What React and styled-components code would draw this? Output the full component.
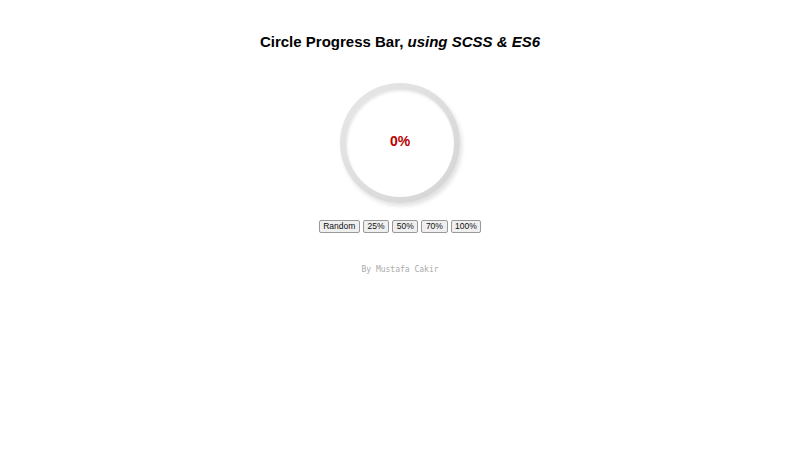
import React, { useState } from "react";
import styled, { createGlobalStyle } from "styled-components";

const Global = createGlobalStyle`
  html, body { margin: 0; padding: 0; background: #fff; }
  body { font-family: "Liberation Sans", Arial, sans-serif; }
`;

const Page = styled.main`
  display: flex;
  flex-direction: column;
  align-items: center;
  padding-top: 32px;
`;

const Title = styled.h1`
  margin: 0;
  font-size: 15px;
  line-height: 20px;
  font-weight: 700;
  color: #000;
  em { font-style: italic; }
`;

const Ring = styled.div`
  margin-top: 31px;
  width: 120px;
  height: 120px;
  border-radius: 50%;
  background: linear-gradient(135deg, #e8e8e8 0%, #d4d4d4 100%);
  box-shadow: 2px 3px 4px rgba(0, 0, 0, 0.12);
  display: flex;
  align-items: center;
  justify-content: center;
`;

const Inner = styled.div`
  width: 108px;
  height: 108px;
  border-radius: 50%;
  background: #fff;
  box-shadow: inset 1px 2px 3px rgba(0, 0, 0, 0.1);
  display: flex;
  align-items: center;
  justify-content: center;
  padding-bottom: 4px;
  box-sizing: border-box;
`;

const Percent = styled.span`
  color: #b80000;
  font-weight: 700;
  font-size: 14px;
`;

const Controls = styled.div`
  margin-top: 17px;
  display: flex;
  gap: 3px;
`;

const Button = styled.button`
  font-family: "Liberation Sans", Arial, sans-serif;
  font-size: 8.5px;
  line-height: 11px;
  padding: 0 3.6px;
  background: #efefef;
  color: #111;
  border: 1px solid #999;
  border-radius: 2px;
  cursor: pointer;
`;

const Credit = styled.p`
  margin: 32px 0 0;
  font-family: "DejaVu Sans Mono", "Liberation Mono", monospace;
  font-size: 8px;
  color: #aaa;
`;

export default function App() {
  const [value, setValue] = useState(0);
  return (
    <Page>
      <Global />
      <Title>
        Circle Progress Bar, <em>using SCSS &amp; ES6</em>
      </Title>
      <Ring>
        <Inner>
          <Percent>{value}%</Percent>
        </Inner>
      </Ring>
      <Controls>
        <Button onClick={() => setValue(Math.floor(Math.random() * 101))}>Random</Button>
        {[25, 50, 70, 100].map((v) => (
          <Button key={v} onClick={() => setValue(v)}>
            {v}%
          </Button>
        ))}
      </Controls>
      <Credit>By Mustafa Cakir</Credit>
    </Page>
  );
}
